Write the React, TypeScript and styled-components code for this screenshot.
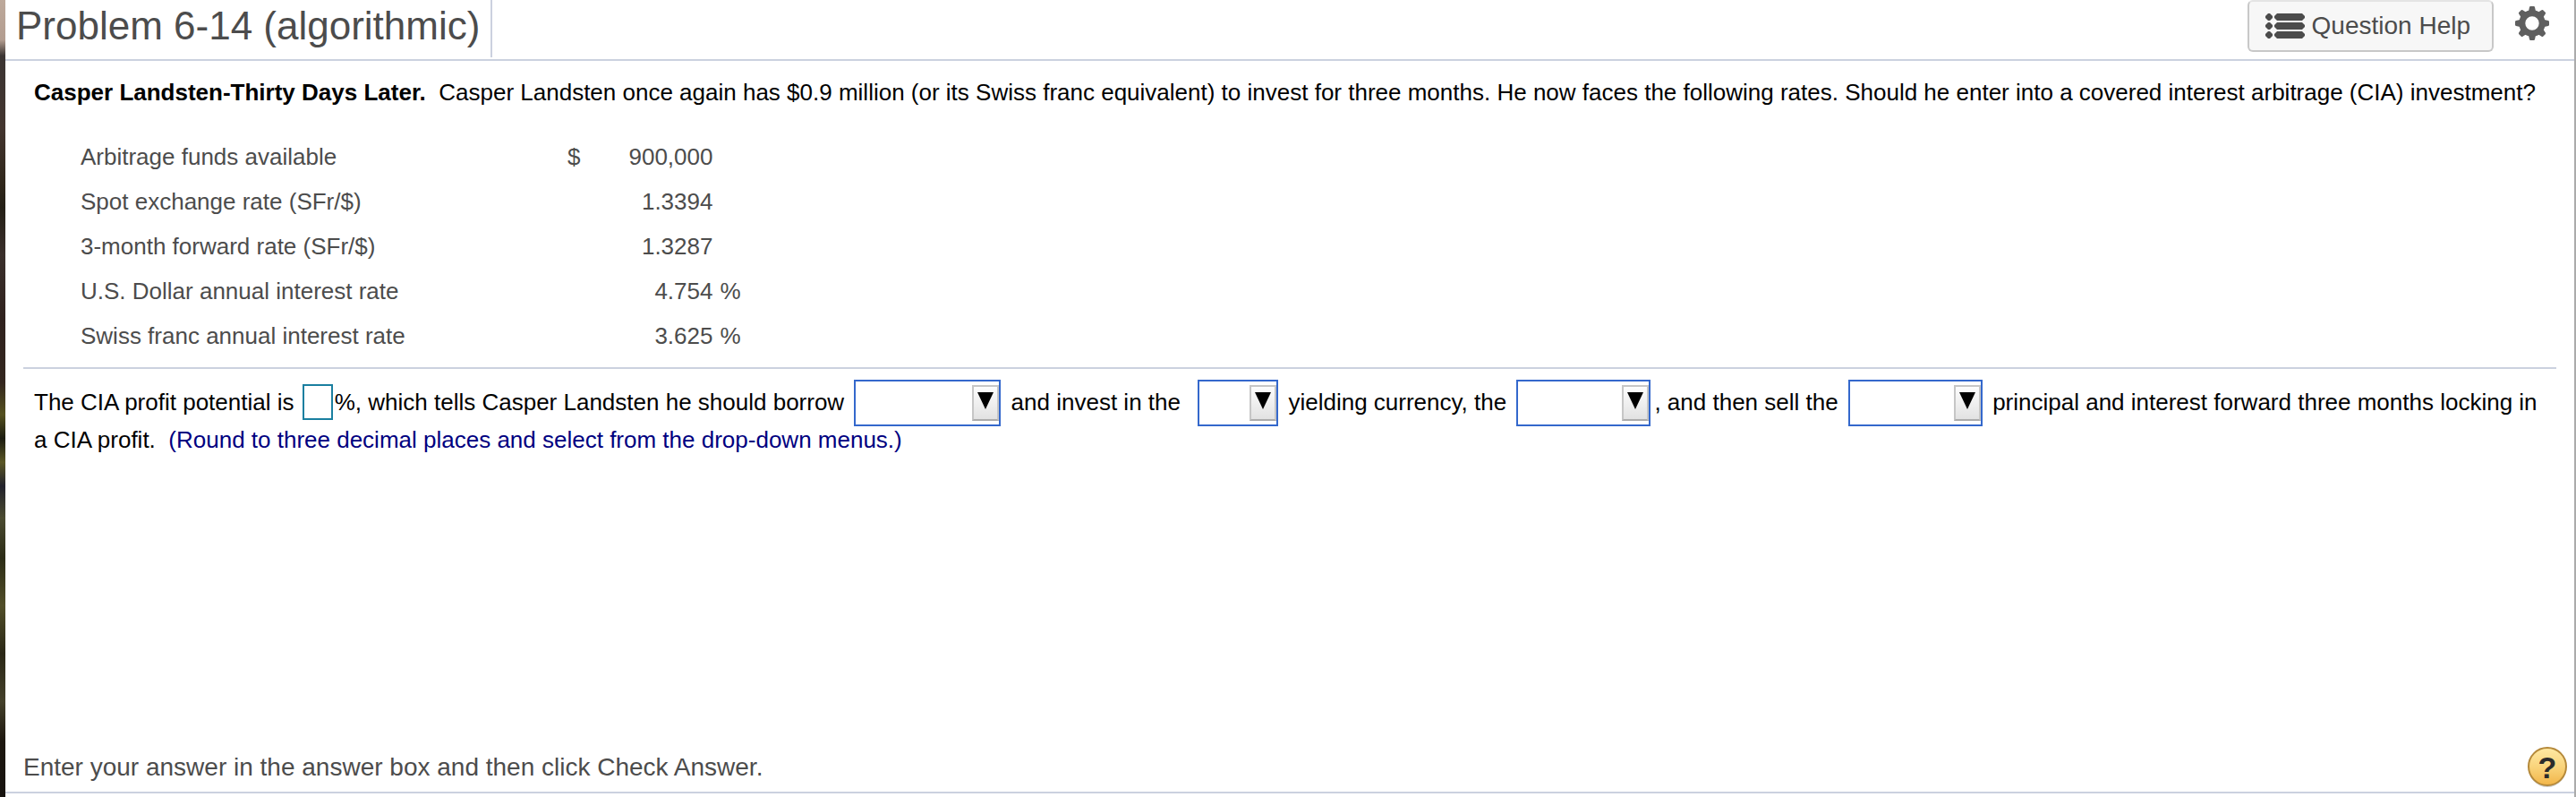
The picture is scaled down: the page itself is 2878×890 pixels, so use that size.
import React from "react";
import styled, { createGlobalStyle } from "styled-components";

const Global = createGlobalStyle`
  * { box-sizing: border-box; }
  body { margin: 0; background: #fff; font-family: "Liberation Sans", Arial, sans-serif; }
`;

const Page = styled.div`
  display: grid;
  grid-template-columns: 6px minmax(0, 1fr) 2px;
  min-height: 100vh;
`;

const Backdrop = styled.div`
  background: linear-gradient(
    to bottom,
    #bda99b 0%, #b39d90 5%, #3b3533 7%, #43352f 16%, #30271b 23%, #241f16 26%,
    #3a2f2b 32%, #30221e 40%, #33261e 48%, #55511f 52%, #1c1c10 55%, #5a5625 58%,
    #22222c 61%, #4a4a30 65%, #2c2c16 70%, #514e28 76%, #2a2716 82%, #44402a 88%,
    #1d170f 93%, #17130f 100%
  );
`;

const EdgeLine = styled.div`
  background: #ababab;
`;

const Panel = styled.main`
  display: flex;
  flex-direction: column;
  background: #fff;
  padding-bottom: 4px;
`;

const Header = styled.header`
  display: flex;
  align-items: flex-start;
  height: 68px;
  border-bottom: 2px solid #cbd1df;
`;

const Title = styled.h1`
  margin: 0;
  height: 64px;
  padding: 0 12px 0 12px;
  border-right: 2px solid #cbd1df;
  color: #4c4c4c;
  font-size: 44px;
  font-weight: 400;
  line-height: 58px;
  white-space: nowrap;
`;

const Tools = styled.div`
  display: flex;
  align-items: flex-start;
  gap: 24px;
  margin-left: auto;
  padding-right: 28px;
`;

const HelpButton = styled.button`
  display: flex;
  align-items: center;
  gap: 6px;
  height: 58px;
  padding: 0 24px 0 18px;
  border: 2px solid #c8c8c8;
  border-top-color: #e4e4e4;
  border-radius: 6px;
  background: #f7f7f7;
  color: #4c4c4c;
  font: 28px "Liberation Sans", Arial, sans-serif;
  white-space: nowrap;
`;

const IconButton = styled.button`
  display: block;
  padding: 0;
  border: 0;
  background: none;
  svg { display: block; }
`;

const GearButton = styled(IconButton)`
  margin-top: 7px;
`;

const Content = styled.section`
  flex: 1;
  padding: 0 20px;
`;

const Intro = styled.p`
  margin: 0;
  padding: 14px 0 0 12px;
  font-size: 26px;
  line-height: 42px;
`;

const Rates = styled.table`
  margin: 26px 0 10px 64px;
  border-collapse: collapse;
  color: #4c4c4c;
  font-size: 26px;
  line-height: 50px;
  th, td { padding: 0; font-weight: 400; text-align: left; }
`;

const Label = styled.th`
  width: 544px;
`;

const Amount = styled.td`
  width: 148px;
  && { text-align: right; }
`;

const Unit = styled.td`
  && { padding-left: 8px; }
`;

const Answer = styled.div`
  border-top: 2px solid #cbd1df;
  padding: 16px 12px 0;
  font-size: 26px;
  line-height: 42px;
`;

const Blank = styled.input`
  width: 34px;
  height: 40px;
  margin: -6px 2px -2px;
  padding: 0 4px;
  border: 2px solid #1a7fa0;
  border-radius: 0;
  background: #fff;
  font: 24px "Liberation Sans", Arial, sans-serif;
  vertical-align: middle;
`;

const Picker = styled.span<{ $width: number; $spaced?: boolean }>`
  position: relative;
  display: inline-flex;
  width: ${(p) => p.$width}px;
  height: 52px;
  margin: -9px 4px -7px ${(p) => (p.$spaced ? 12 : 4)}px;
  vertical-align: middle;
`;

const Select = styled.select`
  width: 100%;
  padding: 0 34px 0 8px;
  border: 2px solid #3468cc;
  border-radius: 0;
  background: #fff;
  appearance: none;
  font: 26px "Liberation Sans", Arial, sans-serif;
`;

const Arrow = styled.span`
  position: absolute;
  top: 6px;
  right: 2px;
  display: flex;
  justify-content: center;
  width: 30px;
  height: 40px;
  padding-top: 6px;
  border: 2px solid #c6c6c6;
  border-bottom-color: #ababab;
  background: linear-gradient(#fdfdfd, #e2e2e2);
  pointer-events: none;
`;

const Hint = styled.span`
  color: #000080;
`;

const Footer = styled.footer`
  display: flex;
  align-items: flex-end;
  justify-content: space-between;
  padding: 0 8px 4px 20px;
  border-bottom: 2px solid #cbd1df;
  color: #4c4c4c;
  font-size: 28px;
  line-height: 46px;
`;

const rows = [
  { label: "Arbitrage funds available", sign: "$", value: "900,000", unit: "" },
  { label: "Spot exchange rate (SFr/$)", sign: "", value: "1.3394", unit: "" },
  { label: "3-month forward rate (SFr/$)", sign: "", value: "1.3287", unit: "" },
  { label: "U.S. Dollar annual interest rate", sign: "", value: "4.754", unit: "%" },
  { label: "Swiss franc annual interest rate", sign: "", value: "3.625", unit: "%" },
];

type DropdownProps = { label: string; width: number; spaced?: boolean; options: string[] };

function Dropdown({ label, width, spaced, options }: DropdownProps) {
  return (
    <Picker $width={width} $spaced={spaced}>
      <Select aria-label={label} defaultValue="">
        <option value="" />
        {options.map((o) => (
          <option key={o}>{o}</option>
        ))}
      </Select>
      <Arrow>
        <svg width="18" height="19" viewBox="0 0 18 19" aria-hidden="true">
          <path d="M0 0H18L9 19Z" />
        </svg>
      </Arrow>
    </Picker>
  );
}

function ListIcon() {
  return (
    <svg width="46" height="30" viewBox="0 0 46 30" fill="#4c4c4c" aria-hidden="true">
      {[1, 11, 21].map((y) => (
        <g key={y}>
          <path d={`M3 ${y}h2l3 3v2l-3 3h-2l-3-3v-2z`} />
          <path d={`M13 ${y}h28l3 3v2l-3 3h-28l-3-3v-2z`} />
        </g>
      ))}
    </svg>
  );
}

function GearIcon() {
  return (
    <svg width="38" height="38" viewBox="-19 -19 38 38" aria-hidden="true">
      <g fill="#5f5f5f">
        {[0, 45, 90, 135, 180, 225, 270, 315].map((a) => (
          <path key={a} transform={`rotate(${a})`} d="M-4.5 -11L-3 -18Q-2.8 -19 -1.8 -19H1.8Q2.8 -19 3 -18L4.5 -11Z" />
        ))}
      </g>
      <circle r="11.2" fill="none" stroke="#5f5f5f" strokeWidth="7" />
    </svg>
  );
}

function QuestionIcon() {
  return (
    <svg width="46" height="46" viewBox="0 0 46 46" aria-hidden="true">
      <defs>
        <linearGradient id="gold" x1="0" y1="0" x2="0" y2="1">
          <stop offset="0" stopColor="#ffe9a4" />
          <stop offset="0.5" stopColor="#f9d47c" />
          <stop offset="1" stopColor="#f2b548" />
        </linearGradient>
      </defs>
      <circle cx="24" cy="24" r="21" fill="#000" opacity="0.18" />
      <circle cx="24" cy="22" r="21" fill="url(#gold)" stroke="#b5893a" strokeWidth="2" />
      <text x="24" y="35" textAnchor="middle" fontFamily="Liberation Sans, Arial, sans-serif" fontSize="34" fontWeight="700" fill="#2b2b2b">?</text>
    </svg>
  );
}

export default function App() {
  return (
    <>
      <Global />
      <Page>
        <Backdrop />
        <Panel>
          <Header>
            <Title>Problem 6-14 (algorithmic)</Title>
            <Tools>
              <HelpButton type="button">
                <ListIcon />
                Question Help
              </HelpButton>
              <GearButton type="button" aria-label="Settings">
                <GearIcon />
              </GearButton>
            </Tools>
          </Header>
          <Content>
            <Intro>
              <b>Casper Landsten-Thirty Days Later.</b>&nbsp; Casper Landsten once again has $0.9 million (or its Swiss
              franc equivalent) to invest for three months. He now faces the following rates. Should he enter into a
              covered interest arbitrage (CIA) investment?
            </Intro>
            <Rates>
              <tbody>
                {rows.map((r) => (
                  <tr key={r.label}>
                    <Label scope="row">{r.label}</Label>
                    <td>{r.sign}</td>
                    <Amount>{r.value}</Amount>
                    <Unit>{r.unit}</Unit>
                  </tr>
                ))}
              </tbody>
            </Rates>
            <Answer>
              The CIA profit potential is <Blank type="text" aria-label="Profit potential in percent" />
              %, which tells Casper Landsten he should borrow{" "}
              <Dropdown label="Currency to borrow" width={164} options={["U.S. dollars", "Swiss francs"]} /> and invest
              in the <Dropdown label="Yield" width={90} spaced options={["higher", "lower"]} /> yielding currency, the{" "}
              <Dropdown label="Currency to invest in" width={150} options={["U.S. dollar", "Swiss franc"]} />, and then
              sell the <Dropdown label="Currency to sell" width={150} options={["U.S. dollar", "Swiss franc"]} />{" "}
              principal and interest forward three months locking in a CIA profit.&nbsp;{" "}
              <Hint>(Round to three decimal places and select from the drop-down menus.)</Hint>
            </Answer>
          </Content>
          <Footer>
            <span>Enter your answer in the answer box and then click Check Answer.</span>
            <IconButton type="button" aria-label="Help">
              <QuestionIcon />
            </IconButton>
          </Footer>
        </Panel>
        <EdgeLine />
      </Page>
    </>
  );
}
